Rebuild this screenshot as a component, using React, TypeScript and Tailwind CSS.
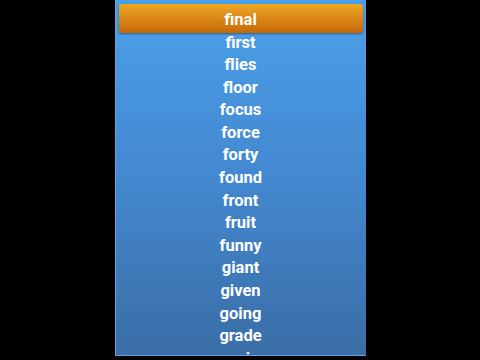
const words = [
  "final",
  "first",
  "flies",
  "floor",
  "focus",
  "force",
  "forty",
  "found",
  "front",
  "fruit",
  "funny",
  "giant",
  "given",
  "going",
  "grade",
  "grain",
];

export default function App() {
  return (
    <div className="flex h-[360px] w-[480px] justify-center bg-black">
      <div className="h-[356px] w-[251px] overflow-hidden border-b border-l border-[#6aa3dc] bg-gradient-to-b from-[#4ba0ea] via-[#4388d0] to-[#3a6ea6] pt-[9px] font-['Roboto',sans-serif] text-white">
        {words.map((w, i) => (
          <div
            key={w}
            className="relative flex h-[22.6px] items-center justify-center text-[16.5px] font-bold"
          >
            {i === 0 && (
              <div className="absolute inset-x-[3px] -top-[5px] -bottom-[1.5px] rounded-[3px] bg-gradient-to-b from-[#eda722] to-[#c6680a] shadow-[0_1px_2px_rgba(0,0,0,0.4)]" />
            )}
            <span className="relative">{w}</span>
          </div>
        ))}
      </div>
    </div>
  );
}
